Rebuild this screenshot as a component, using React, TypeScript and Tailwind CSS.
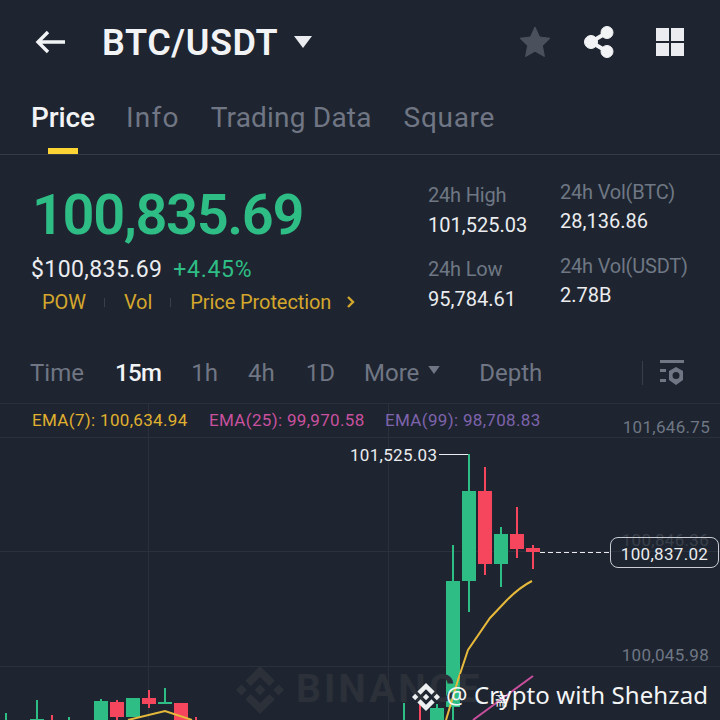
const BG = "M38.73 53.2l24.59-24.58 24.6 24.6 14.3-14.31L63.32 0 24.42 38.9zM0 63.31l14.3-14.31 14.31 14.31-14.31 14.3zM38.73 73.41l24.59 24.59 24.6-24.6 14.31 14.29-38.9 38.91-38.91-38.88zM98 63.31l14.3-14.31 14.31 14.3-14.31 14.32zM77.83 63.3L63.32 48.78 52.59 59.51l-1.24 1.23-2.54 2.54 14.51 14.5 14.51-14.47z";

// x, bodyTop, bodyBottom, wickTop, wickBottom
const green = [
  [94, 701, 720, 699, 720],
  [126, 698, 717, 698, 717],
  [158, 702, 704, 688, 704],
  [30, 719, 721, 700, 721],
  [430, 708, 720, 704, 720],
  [446, 581, 707, 545, 720],
  [462, 491, 581, 454, 612],
  [494, 534, 564, 527, 587],
];
const red = [
  [110, 702, 717, 700, 720],
  [142, 698, 704, 690, 708],
  [174, 703, 720, 703, 720],
  [478, 491, 564, 467, 575],
  [510, 534, 549, 507, 558],
  [526, 548, 552, 545, 569],
];

function Candle({ c, color }: { c: number[]; color: string }) {
  const [x, top, bottom, wTop, wBottom] = c;
  return (
    <g fill={color}>
      <rect x={x + 6} y={wTop} width="2" height={wBottom - wTop} />
      <rect x={x} y={top} width="14" height={bottom - top} />
    </g>
  );
}

function Chart() {
  return (
    <svg className="absolute inset-0" width="720" height="316" viewBox="0 404 720 316" fill="none">
      <g stroke="#2b313b" strokeWidth="1">
        <path d="M0 437.5H720M0 551.5H720M0 666.5H720M148.5 404V720M388.5 404V720" />
      </g>
      <g transform="translate(236 666) scale(0.38)" fill="#2b3039">
        <path d={BG} />
      </g>
      {green.map((c) => <Candle key={c[0]} c={c} color="#2ebd85" />)}
      {red.map((c) => <Candle key={c[0]} c={c} color="#f6465d" />)}
      <rect x="5" y="713" width="2" height="7" fill="#2ebd85" />
      <rect x="51" y="715" width="2" height="5" fill="#f6465d" />
      <rect x="68" y="717" width="2" height="3" fill="#2ebd85" />
      <rect x="195" y="717" width="2" height="3" fill="#f6465d" />
      <rect x="403" y="703" width="2" height="17" fill="#2ebd85" />
      <rect x="419" y="700" width="2" height="20" fill="#f6465d" />
      <path d="M128 720L165 711L192 720" stroke="#e6b93c" strokeWidth="2" />
      <path d="M446 720L458 680L468 650L490 618L507 600C515 592 524 585 532 581" stroke="#e6b93c" strokeWidth="2" />
      <path d="M473 720L533 676" stroke="#c94f9e" strokeWidth="2" />
      <path d="M439 454.500H468" stroke="#eaecef" strokeWidth="1" />
      <path d="M540 552.500H610" stroke="#eaecef" strokeWidth="1" strokeDasharray="5 3" />
    </svg>
  );
}

function Stat({ label, value, gap }: { label: string; value: string; gap: string }) {
  return (
    <div className={`flex flex-col ${gap}`}>
      <span className="text-[20px] leading-[24px] text-[#6f7784] tracking-[-0.2px]">{label}</span>
      <span className="text-[20px] leading-[24px] text-[#eaecef]">{value}</span>
    </div>
  );
}

export default function App() {
  return (
    <div className="w-[720px] h-[720px] overflow-hidden flex flex-col bg-[#1e2530] font-['Roboto',sans-serif]">
      <div className="h-[84px] flex items-center pl-[35px] pr-[36px] shrink-0">
        <svg width="30" height="24" viewBox="0 0 30 24" fill="none" stroke="#f2f3f5" strokeWidth="3.4">
          <path d="M30 12H3M13 2L3 12L13 22" />
        </svg>
        <span className="ml-[37px] mt-[2px] text-[36px] leading-none font-semibold text-[#f2f3f5] tracking-[0.6px]">BTC/USDT</span>
        <svg className="ml-[15px]" width="20" height="14" viewBox="0 0 20 14" fill="#eaecef">
          <path d="M1 1H19L10 13Z" />
        </svg>
        <div className="ml-auto flex items-center">
          <svg width="32" height="32" viewBox="0 0 32 32" fill="#4a505c">
            <path d="M16 1l4.600 10 10.400 1.300-7.600 7.400 2 10.800L16 25.200 6.600 30.500l2-10.800L1 12.300 11.400 11z" stroke="#4a505c" strokeWidth="1" strokeLinejoin="round" />
          </svg>
          <svg className="ml-[33px]" width="30" height="32" viewBox="0 0 30 32" fill="#f2f3f5" stroke="#f2f3f5">
            <circle cx="7" cy="16" r="6.500" />
            <circle cx="23" cy="6.500" r="6" />
            <circle cx="23" cy="25.500" r="6" />
            <path d="M7 16L23 6.500M7 16L23 25.500" strokeWidth="4" />
          </svg>
          <div className="ml-[42px] grid grid-cols-2 gap-[2px] w-[28px] h-[28px]">
            <div className="bg-[#eaecef]" />
            <div className="bg-[#eaecef]" />
            <div className="bg-[#eaecef]" />
            <div className="bg-[#eaecef]" />
          </div>
        </div>
      </div>

      <div className="h-[71px] shrink-0 border-b border-[#353b46] flex items-start pl-[31px] text-[28px] leading-[34px] text-[#707684] pt-[17px] relative tracking-[0.2px]">
        <span className="text-[#f2f3f5] font-medium tracking-[-0.1px]">Price</span>
        <span className="ml-[31px] tracking-[1.2px]">Info</span>
        <span className="ml-[31px]">Trading Data</span>
        <span className="ml-[32px] tracking-[0.7px]">Square</span>
        <div className="absolute left-[48px] bottom-0 w-[30px] h-[6px] bg-[#fcd535]" />
      </div>

      <div className="h-[197px] shrink-0 flex">
        <div className="w-[429px] pl-[31px] pt-[27px] flex flex-col">
          <span className="pl-[1px] text-[56px] leading-[66px] font-semibold text-[#2ebd85] tracking-[-1.4px]">100,835.69</span>
          <div className="mt-[9px] flex items-center gap-[11px] text-[23px] leading-[26px] tracking-[0.4px]">
            <span className="text-[#eaecef]">$100,835.69</span>
            <span className="text-[#2ebd85] tracking-[0.7px]">+4.45%</span>
          </div>
          <div className="mt-[6px] pl-[11px] flex items-center text-[20px] leading-[26px] text-[#d4a72c] tracking-[-0.08px]">
            <span>POW</span>
            <div className="ml-[18px] w-px h-[9px] bg-[#3a404b]" />
            <span className="ml-[19px]">Vol</span>
            <div className="ml-[18px] w-px h-[9px] bg-[#3a404b]" />
            <span className="ml-[19px]">Price Protection</span>
            <svg className="ml-[15px]" width="10" height="12" viewBox="0 0 10 12" fill="none" stroke="#d4a72c" strokeWidth="2.400">
              <path d="M2 1L7 6L2 11" />
            </svg>
          </div>
        </div>
        <div className="w-[132px] pt-[28px] flex flex-col gap-[20px] -ml-px">
          <Stat label="24h High" value="101,525.03" gap="gap-[6px]" />
          <Stat label="24h Low" value="95,784.61" gap="gap-[6px]" />
        </div>
        <div className="pt-[25px] flex flex-col gap-[21px]">
          <Stat label="24h Vol(BTC)" value="28,136.86" gap="gap-[5px]" />
          <Stat label="24h Vol(USDT)" value="2.78B" gap="gap-[5px]" />
        </div>
      </div>

      <div className="h-[52px] shrink-0 border-b border-[#2b313b] flex items-center pl-[30px] pb-[10px] text-[24px] leading-[30px] text-[#707684]">
        <span>Time</span>
        <span className="ml-[31px] text-[#f2f3f5] font-medium tracking-[-0.6px]">15m</span>
        <span className="ml-[30px]">1h</span>
        <span className="ml-[30px]">4h</span>
        <span className="ml-[31px]">1D</span>
        <span className="ml-[29px]">More</span>
        <svg className="ml-[9px] mb-[6px]" width="12" height="8" viewBox="0 0 13 9" fill="#707684">
          <path d="M0 0H13L6.500 9Z" />
        </svg>
        <span className="ml-[39px]">Depth</span>
        <div className="ml-auto w-px h-[24px] bg-[#3a404b]" />
        <svg className="ml-[17px] mr-[36px]" width="24" height="26" viewBox="0 0 24 26" fill="#707684">
          <rect x="0" y="0" width="24" height="3" />
          <rect x="0" y="9" width="6" height="3" />
          <rect x="0" y="19" width="6" height="3" />
          <path fillRule="evenodd" d="M16 7l7 4v9l-7 5-7-5v-9zM16 12a3.500 3.500 0 1 0 0 7a3.500 3.500 0 1 0 0-7z" />
        </svg>
      </div>

      <div className="relative flex-1">
        <Chart />
        <div className="relative flex pl-[32px] pt-[5px] text-[17px] leading-[22px] tracking-[0.33px]">
          <span className="w-[177px] text-[#e0b02f]">EMA(7): 100,634.94</span>
          <span className="w-[176px] text-[#c9519f]">EMA(25): 99,970.58</span>
          <span className="text-[#7f63ad]">EMA(99): 98,708.83</span>
        </div>

        <span className="absolute right-[10px] top-[12px] text-[17px] leading-[22px] text-[#6f7784] tracking-[0.3px]">101,646.75</span>
        <span className="absolute right-[11px] top-[240px] text-[17px] leading-[22px] text-[#6f7784] tracking-[0.3px]">100,045.98</span>
        <span className="absolute left-[350px] top-[40px] text-[17px] leading-[22px] text-[#eaecef] tracking-[0.3px]">101,525.03</span>
        <span className="absolute right-[11px] top-[125px] text-[17px] leading-[22px] text-[#3a404b] tracking-[0.3px]">100,846.36</span>
        <div className="absolute left-[610px] top-[133px] w-[109px] h-[31px] border border-[#c9ccd1] rounded-[8px] pt-[4px] flex items-center justify-center text-[17px] text-[#eaecef] tracking-[0.3px]">100,837.02</div>

        <span className="absolute left-[296px] top-[262px] text-[39px] leading-[46px] font-bold text-[#2b3039] tracking-[3px]">BINANCE</span>

        <div className="absolute left-[412px] top-[276px] flex items-center whitespace-nowrap">
          <svg width="28" height="28" viewBox="0 0 126.61 126.61" fill="#eef0f2">
            <path d={BG} />
          </svg>
          <span className="ml-[6px] mb-[3px] text-[24px] leading-[30px] tracking-[0.1px] text-[#f4f5f6] font-['Noto_Sans',sans-serif]">@ Crypto with Shehzad</span>
        </div>
        <span className="absolute left-[495px] top-[288px] text-[13px] leading-[16px] text-white font-['Noto_Sans_CJK_SC',sans-serif]">斋</span>
      </div>
    </div>
  );
}
